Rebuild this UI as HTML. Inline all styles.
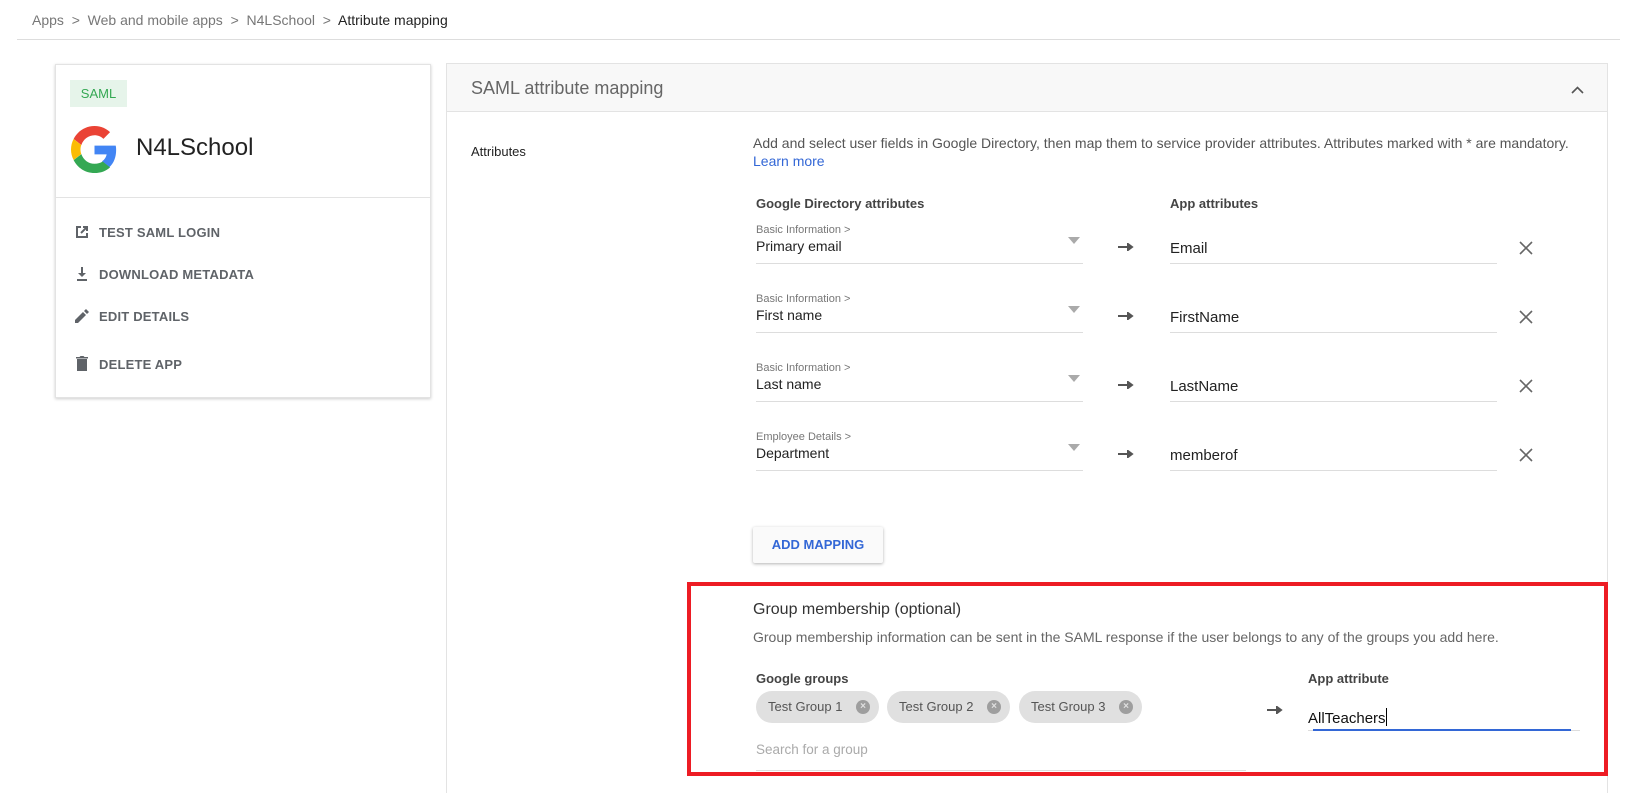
<!DOCTYPE html>
<html><head><meta charset="utf-8"><style>
body{margin:0;width:1646px;height:806px;background:#fff;font-family:"Liberation Sans",Arial,sans-serif;position:relative;overflow:hidden}
.a{position:absolute;white-space:nowrap}
.lab{font-size:11px;color:#777}
.val{font-size:14px;color:#222}
.ul{position:absolute;height:1px;background:#ddd}
.menu{font-size:13px;font-weight:bold;color:#5f6368;letter-spacing:.2px}
.chip{position:absolute;top:691px;height:32px;border-radius:16px;background:#e0e0e0;font-size:13px;color:#555;line-height:32px;padding-left:12px;box-sizing:border-box}
.chip i{position:absolute;right:9px;top:9px;width:14px;height:14px;border-radius:50%;background:#9e9e9e;color:#e0e0e0;font-style:normal;font-size:10px;line-height:14px;text-align:center;font-weight:bold}
</style></head><body>
<div class="a" style="left:32px;top:12px;font-size:14px;color:#777">Apps &nbsp;&gt;&nbsp; Web and mobile apps &nbsp;&gt;&nbsp; N4LSchool &nbsp;&gt;&nbsp; <span style="color:#222">Attribute mapping</span></div>
<div style="position:absolute;left:17px;top:39px;width:1603px;height:1px;background:#ddd"></div>

<!-- left card -->
<div style="position:absolute;left:55px;top:64px;width:376px;height:334px;border:1px solid #e3e3e3;box-shadow:0 1px 3px rgba(0,0,0,.2);box-sizing:border-box;background:#fff"></div>
<div class="a" style="left:70px;top:80px;width:57px;height:27px;background:#e6f4ea;color:#34a853;font-size:13px;line-height:27px;text-align:center">SAML</div>
<svg class="a" style="left:71px;top:126px" width="47" height="47" viewBox="0 0 48 48"><path fill="#EA4335" d="M24 9.5c3.5 0 6.6 1.2 9.1 3.6l6.8-6.8C35.8 2.4 30.3 0 24 0 14.6 0 6.6 5.4 2.7 13.3l7.9 6.1C12.5 13.7 17.800 9.5 24 9.5z"/><path fill="#4285F4" d="M46.1 24.5c0-1.6-.1-3.1-.4-4.5H24v9h12.4c-.5 2.9-2.2 5.4-4.7 7.1l7.6 5.9c4.4-4.1 6.8-10.1 6.8-17.5z"/><path fill="#FBBC05" d="M10.5 28.6c-.5-1.4-.8-3-.8-4.6s.3-3.2.8-4.6l-7.9-6.1C1 16.6 0 20.2 0 24s.9 7.4 2.7 10.7l7.8-6.1z"/><path fill="#34A853" d="M24 48c6.5 0 11.9-2.1 15.9-5.8l-7.6-5.9c-2.2 1.5-4.9 2.3-8.3 2.3-6.2 0-11.5-4.2-13.4-9.9l-7.9 6.1C6.6 42.6 14.6 48 24 48z"/></svg>
<div class="a" style="left:136px;top:134px;font-size:24px;color:#222">N4LSchool</div>
<div style="position:absolute;left:56px;top:197px;width:374px;height:1px;background:#e3e3e3"></div>
<svg class="a" style="left:75px;top:225px" width="14" height="14" viewBox="0 0 14 14"><path d="M1 1h5v2H3v8h8V8h2v5H1z M8 1h5v5h-2V4.4L6.7 8.7 5.3 7.3 9.6 3H8z" fill="#5f6368"/></svg>
<div class="a menu" style="left:99px;top:225px">TEST SAML LOGIN</div>
<svg class="a" style="left:75px;top:267px" width="14" height="14" viewBox="0 0 14 14"><path d="M6 0h2v6h3L7 10 3 6h3z M2 12h10v2H2z" fill="#5f6368"/></svg>
<div class="a menu" style="left:99px;top:267px">DOWNLOAD METADATA</div>
<svg class="a" style="left:75px;top:309px" width="14" height="14" viewBox="0 0 14 14"><path d="M0 11v3h3l8-8-3-3z M9 2l3 3 2-2-3-3z" fill="#5f6368"/></svg>
<div class="a menu" style="left:99px;top:309px">EDIT DETAILS</div>
<svg class="a" style="left:76px;top:356px" width="12" height="15" viewBox="0 0 12 15"><path d="M1 3h10v12H1z M0 1h3.5l1-1h3l1 1H12v1.5H0z" fill="#5f6368"/></svg>
<div class="a menu" style="left:99px;top:357px">DELETE APP</div>

<!-- right card -->
<div style="position:absolute;left:446px;top:63px;width:1162px;height:730px;border:1px solid #e3e3e3;border-bottom:none;box-sizing:border-box;background:#fff"></div>
<div style="position:absolute;left:447px;top:64px;width:1160px;height:47px;background:#f8f8f8;border-bottom:1px solid #e3e3e3"></div>
<div class="a" style="left:471px;top:78px;font-size:18px;color:#666">SAML attribute mapping</div>
<svg class="a" style="left:1571px;top:86px" width="13" height="8" viewBox="0 0 13 8"><path d="M1 7l5.5-5.5L12 7" stroke="#555" stroke-width="1.6" fill="none"/></svg>

<div class="a" style="left:471px;top:144px;font-size:13px;color:#222">Attributes</div>
<div class="a" style="left:753px;top:135px;font-size:14px;color:#555">Add and select user fields in Google Directory, then map them to service provider attributes. Attributes marked with * are mandatory.</div>
<div class="a" style="left:753px;top:153px;font-size:14px;color:#3367d6">Learn more</div>
<div class="a" style="left:756px;top:196px;font-size:13px;font-weight:bold;color:#444">Google Directory attributes</div>
<div class="a" style="left:1170px;top:196px;font-size:13px;font-weight:bold;color:#444">App attributes</div>

<div class="a lab" style="left:756px;top:224px">Basic Information &gt;</div><div class="a val" style="left:756px;top:238px">Primary email</div>
<div class="a lab" style="left:756px;top:293px">Basic Information &gt;</div><div class="a val" style="left:756px;top:307px">First name</div>
<div class="a lab" style="left:756px;top:362px">Basic Information &gt;</div><div class="a val" style="left:756px;top:376px">Last name</div>
<div class="a lab" style="left:756px;top:431px">Employee Details &gt;</div><div class="a val" style="left:756px;top:445px">Department</div>

<div class="ul" style="left:756px;top:263px;width:327px"></div><div class="ul" style="left:756px;top:332px;width:327px"></div><div class="ul" style="left:756px;top:401px;width:327px"></div><div class="ul" style="left:756px;top:470px;width:327px"></div>
<div class="ul" style="left:1170px;top:263px;width:327px"></div><div class="ul" style="left:1170px;top:332px;width:327px"></div><div class="ul" style="left:1170px;top:401px;width:327px"></div><div class="ul" style="left:1170px;top:470px;width:327px"></div>

<div class="a val" style="left:1170px;top:240px;font-size:15px">Email</div>
<div class="a val" style="left:1170px;top:309px;font-size:15px">FirstName</div>
<div class="a val" style="left:1170px;top:378px;font-size:15px">LastName</div>
<div class="a val" style="left:1170px;top:447px;font-size:15px">memberof</div>

<svg class="a" style="left:1068px;top:237px" width="12" height="7"><path d="M0 0h12L6 7z" fill="#aaa"/></svg>
<svg class="a" style="left:1068px;top:306px" width="12" height="7"><path d="M0 0h12L6 7z" fill="#aaa"/></svg>
<svg class="a" style="left:1068px;top:375px" width="12" height="7"><path d="M0 0h12L6 7z" fill="#aaa"/></svg>
<svg class="a" style="left:1068px;top:444px" width="12" height="7"><path d="M0 0h12L6 7z" fill="#aaa"/></svg>

<svg class="a" style="left:1118px;top:243px" width="17" height="8"><path d="M0 4h13M10 1l4 3-4 3z" stroke="#555" stroke-width="2" fill="#555"/></svg>
<svg class="a" style="left:1118px;top:312px" width="17" height="8"><path d="M0 4h13M10 1l4 3-4 3z" stroke="#555" stroke-width="2" fill="#555"/></svg>
<svg class="a" style="left:1118px;top:381px" width="17" height="8"><path d="M0 4h13M10 1l4 3-4 3z" stroke="#555" stroke-width="2" fill="#555"/></svg>
<svg class="a" style="left:1118px;top:450px" width="17" height="8"><path d="M0 4h13M10 1l4 3-4 3z" stroke="#555" stroke-width="2" fill="#555"/></svg>

<svg class="a" style="left:1519px;top:241px" width="14" height="14"><path d="M1 1l12 12M13 1L1 13" stroke="#666" stroke-width="1.6"/></svg>
<svg class="a" style="left:1519px;top:310px" width="14" height="14"><path d="M1 1l12 12M13 1L1 13" stroke="#666" stroke-width="1.6"/></svg>
<svg class="a" style="left:1519px;top:379px" width="14" height="14"><path d="M1 1l12 12M13 1L1 13" stroke="#666" stroke-width="1.6"/></svg>
<svg class="a" style="left:1519px;top:448px" width="14" height="14"><path d="M1 1l12 12M13 1L1 13" stroke="#666" stroke-width="1.6"/></svg>

<div class="a" style="left:753px;top:527px;width:130px;height:36px;background:#fafafa;box-shadow:0 1px 3px rgba(0,0,0,.3);border-radius:2px;font-size:13px;font-weight:bold;color:#3367d6;line-height:36px;text-align:center">ADD MAPPING</div>

<!-- red box -->
<div style="position:absolute;left:687px;top:582px;width:921px;height:194px;border:4px solid #ed1c24;box-sizing:border-box"></div>
<div class="a" style="left:753px;top:601px;font-size:16px;color:#333">Group membership (optional)</div>
<div class="a" style="left:753px;top:629px;font-size:14px;color:#666">Group membership information can be sent in the SAML response if the user belongs to any of the groups you add here.</div>
<div class="a" style="left:756px;top:671px;font-size:13px;font-weight:bold;color:#444">Google groups</div>
<div class="a" style="left:1308px;top:671px;font-size:13px;font-weight:bold;color:#444">App attribute</div>
<div class="chip" style="left:756px;width:123px">Test Group 1<i>×</i></div>
<div class="chip" style="left:887px;width:123px">Test Group 2<i>×</i></div>
<div class="chip" style="left:1019px;width:123px">Test Group 3<i>×</i></div>
<svg class="a" style="left:1267px;top:706px" width="17" height="8"><path d="M0 4h13M10 1l4 3-4 3z" stroke="#555" stroke-width="2" fill="#555"/></svg>
<div class="a" style="left:1308px;top:708px;font-size:15px;color:#111">AllTeachers<span style="display:inline-block;width:1px;height:18px;background:#000;vertical-align:-3px"></span></div>
<div class="ul" style="left:1308px;top:730px;width:272px"></div>
<div style="position:absolute;left:1313px;top:729px;width:258px;height:2px;background:#3367d6"></div>
<div class="a" style="left:756px;top:742px;font-size:13.5px;color:#aaa">Search for a group</div>
<div class="ul" style="left:756px;top:770px;width:490px"></div>
</body></html>
